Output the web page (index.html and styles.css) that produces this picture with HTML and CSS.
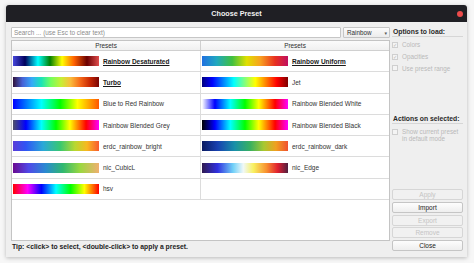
FILE: index.html
```html
<!DOCTYPE html>
<html>
<head>
<meta charset="utf-8">
<link rel="stylesheet" href="styles.css">
</head>
<body>
<div class="window">
  <div class="titlebar">
    <span class="title">Choose Preset</span>
    <span class="close"></span>
  </div>
  <div class="content">
    <div class="main">
      <div class="searchrow">
        <div class="search">Search ... (use Esc to clear text)</div>
        <div class="combo"><span>Rainbow</span><span class="arrow">▾</span></div>
      </div>
      <div class="table">
        <div class="thead">
          <div class="th">Presets</div>
          <div class="th">Presets</div>
        </div>
        <div class="row">
          <div class="cell"><span class="grad g-rd"></span><span class="name def">Rainbow Desaturated</span></div>
          <div class="cell"><span class="grad g-ru"></span><span class="name def">Rainbow Uniform</span></div>
        </div>
        <div class="row">
          <div class="cell"><span class="grad g-turbo"></span><span class="name def">Turbo</span></div>
          <div class="cell"><span class="grad g-jet"></span><span class="name">Jet</span></div>
        </div>
        <div class="row">
          <div class="cell"><span class="grad g-b2r"></span><span class="name">Blue to Red Rainbow</span></div>
          <div class="cell"><span class="grad g-rbw"></span><span class="name">Rainbow Blended White</span></div>
        </div>
        <div class="row">
          <div class="cell"><span class="grad g-rbg"></span><span class="name">Rainbow Blended Grey</span></div>
          <div class="cell"><span class="grad g-rbb"></span><span class="name">Rainbow Blended Black</span></div>
        </div>
        <div class="row">
          <div class="cell"><span class="grad g-erb"></span><span class="name">erdc_rainbow_bright</span></div>
          <div class="cell"><span class="grad g-erd"></span><span class="name">erdc_rainbow_dark</span></div>
        </div>
        <div class="row">
          <div class="cell"><span class="grad g-cubic"></span><span class="name">nic_CubicL</span></div>
          <div class="cell"><span class="grad g-edge"></span><span class="name">nic_Edge</span></div>
        </div>
        <div class="row">
          <div class="cell"><span class="grad g-hsv"></span><span class="name">hsv</span></div>
          <div class="cell"></div>
        </div>
      </div>
      <div class="tip">Tip: &lt;click&gt; to select, &lt;double-click&gt; to apply a preset.</div>
    </div>
    <div class="side">
      <div class="group">Options to load:</div>
      <label class="check"><span class="box on">✓</span>Colors</label>
      <label class="check"><span class="box on">✓</span>Opacities</label>
      <label class="check"><span class="box"></span>Use preset range</label>
      <div class="group actions">Actions on selected:</div>
      <label class="check two"><span class="box"></span><span>Show current preset<br>in default mode</span></label>
      <div class="buttons">
        <div class="btn dis">Apply</div>
        <div class="btn">Import</div>
        <div class="btn dis">Export</div>
        <div class="btn dis">Remove</div>
        <div class="btn">Close</div>
      </div>
    </div>
  </div>
</div>
</body>
</html>
```

FILE: styles.css
```css
* { box-sizing: border-box; }
html, body { margin: 0; padding: 0; }
body {
  background: #f7f7f7;
  width: 474px;
  height: 263px;
  overflow: hidden;
  font-family: "Liberation Sans", "DejaVu Sans", sans-serif;
  font-size: 6.5px;
  color: #2e2e2e;
}
.window {
  margin: 5px 0 0 6px;
  width: 461px;
  height: 252px;
  background: #efefef;
  box-shadow: 0 1px 4px rgba(0,0,0,0.25);
  display: flex;
  flex-direction: column;
}
.titlebar {
  height: 17px;
  background: #1f1f24;
  border-radius: 3px 3px 0 0;
  display: flex;
  align-items: center;
  justify-content: center;
  position: relative;
}
.title {
  color: #f2f2f2;
  font-weight: bold;
  font-size: 7.2px;
}
.close {
  position: absolute;
  right: 4px;
  top: 6px;
  width: 6px;
  height: 6px;
  border-radius: 50%;
  background: #ec4b4b;
}
.content {
  flex: 1;
  display: flex;
  gap: 2px;
  padding: 5px 4px 0 5px;
}
.main {
  width: 379px;
  display: flex;
  flex-direction: column;
}
.searchrow {
  display: flex;
  gap: 2px;
  height: 11px;
}
.search {
  width: 330px;
  background: #fff;
  border: 1px solid #c6c6c6;
  border-radius: 1px;
  color: #8c8c8c;
  font-size: 6.4px;
  line-height: 9px;
  padding-left: 2px;
}
.combo {
  flex: 1;
  border: 1px solid #c6c6c6;
  border-radius: 1px;
  background: linear-gradient(#fbfbfb, #ececec);
  display: flex;
  justify-content: space-between;
  align-items: center;
  padding: 0 2px 0 3px;
  font-size: 6.3px;
}
.arrow { font-size: 5px; color: #555; }
.table {
  margin-top: 2px;
  height: 201px;
  background: #fff;
  border: 1px solid #c4c4c4;
}
.thead {
  display: grid;
  grid-template-columns: 188px 1fr;
  height: 10px;
  background: linear-gradient(#fbfbfb, #f0f0f0);
  border-bottom: 1px solid #d0d0d0;
}
.th {
  text-align: center;
  line-height: 9px;
  font-size: 6.4px;
}
.th + .th { border-left: 1px solid #d0d0d0; }
.row {
  display: grid;
  grid-template-columns: 188px 1fr;
  height: 21.3px;
  border-bottom: 1px solid #dcdcdc;
}
.cell {
  display: flex;
  align-items: center;
  gap: 4px;
  padding-left: 1px;
}
.cell + .cell { border-left: 1px solid #dcdcdc; }
.grad {
  width: 86px;
  height: 10px;
  flex: none;
}
.name { color: #333; }
.name.def { font-weight: bold; text-decoration: underline; color: #1a1a1a; }
.tip {
  font-weight: bold;
  font-size: 6.8px;
  color: #222;
  padding: 2px 0 0 1px;
}
.side {
  flex: 1;
  display: flex;
  flex-direction: column;
}
.group {
  font-weight: bold;
  font-size: 6.8px;
  color: #2a2a2a;
  padding: 1px 0 1px 1px;
  border-bottom: 1px solid #d6d6d6;
  margin-bottom: 2px;
}
.actions { margin-top: 40px; }
.check {
  display: flex;
  align-items: center;
  gap: 4px;
  height: 11.7px;
  color: #b9b9b9;
  font-size: 6.3px;
}
.check.two { align-items: flex-start; height: 16px; line-height: 7px; margin-top: 2px; }
.box {
  width: 6px;
  height: 6px;
  border: 1px solid #cfcfcf;
  background: #f4f4f4;
  font-size: 5px;
  line-height: 4px;
  text-align: center;
  color: #b5b5b5;
  flex: none;
}
.check.two .box { margin-top: 1px; }
.buttons {
  margin-top: auto;
  margin-bottom: 6px;
  display: flex;
  flex-direction: column;
  gap: 1.7px;
}
.btn {
  height: 11px;
  border: 1px solid #c5c5c5;
  border-radius: 2px;
  background: linear-gradient(#fdfdfd, #eeeeee);
  text-align: center;
  line-height: 9px;
  font-size: 6.5px;
  color: #222;
}
.btn.dis { color: #c4c4c4; border-color: #d6d6d6; background: #f1f1f1; }

.g-rd { background: linear-gradient(90deg, #4747db 0%, #00005c 14%, #00ffff 29%, #008000 43%, #ffff00 57%, #ff6100 71%, #6b0000 86%, #e04d4d 100%); }
.g-turbo { background: linear-gradient(90deg, #30123b, #4662d7 11%, #36aaf9 22%, #1ae4b6 33%, #72fe5e 44%, #c7ef34 56%, #fabb3a 67%, #f66b19 78%, #ca2a04 89%, #7a0403); }
.g-b2r { background: linear-gradient(90deg, #0000ff, #00ffff 33%, #00ff00 55%, #ffff00 75%, #ff5500 100%); }
.g-rbg { background: linear-gradient(90deg, #50506a, #0000ff 15%, #00ffff 33%, #00ff00 50%, #ffff00 66%, #ff0000 85%, #ff00ff); }
.g-erb { background: linear-gradient(90deg, #5a3cd8, #2f55f5 15%, #2aa8d8 35%, #38c870 55%, #b8d830 72%, #f8b820 86%, #f85a30); }
.g-cubic { background: linear-gradient(90deg, #6a0a90, #5048e8 18%, #2a8ad0 38%, #30b870 58%, #9ad840 78%, #f0b070); }
.g-hsv { background: linear-gradient(90deg, #ff0000, #ff00ff 17%, #0000ff 33%, #00ffff 50%, #00ff00 67%, #ffff00 83%, #ff0000); }
.g-ru { background: linear-gradient(90deg, #2070e0, #20a8c0 17%, #40c040 35%, #e0e000 52%, #f8a020 68%, #e83020 85%, #c01060); }
.g-jet { background: linear-gradient(90deg, #00007f, #0000ff 12%, #00ffff 37%, #ffff00 62%, #ff0000 87%, #7f0000); }
.g-rbw { background: linear-gradient(90deg, #ffffff, #0000ff 15%, #00ffff 33%, #00ff00 50%, #ffff00 66%, #ff0000 85%, #ff00ff); }
.g-rbb { background: linear-gradient(90deg, #000000, #0000ff 15%, #00ffff 33%, #00ff00 50%, #ffff00 66%, #ff0000 85%, #ff00ff); }
.g-erd { background: linear-gradient(90deg, #0a1a60, #1840b0 18%, #1890a8 38%, #38b060 56%, #a8c830 72%, #f0a020 86%, #f05030); }
.g-edge { background: linear-gradient(90deg, #301a50, #3030e0 18%, #70d0f8 36%, #f0f8f8 48%, #f8f060 60%, #f89030 75%, #e02030 88%, #502040); }
```
